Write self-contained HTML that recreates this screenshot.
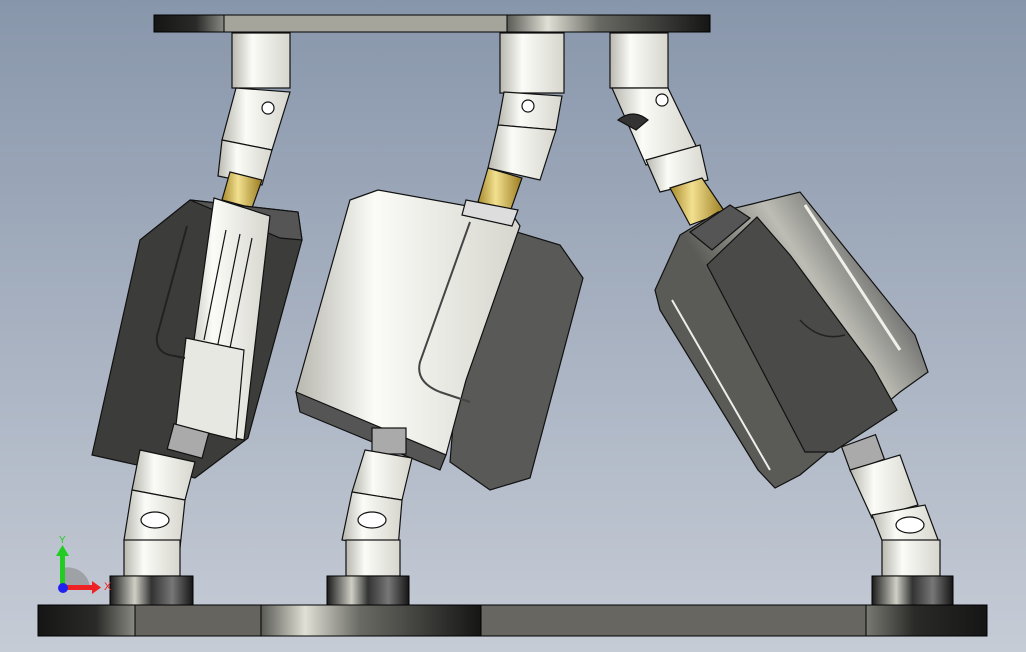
<!DOCTYPE html>
<html><head><style>
html,body{margin:0;padding:0;width:1026px;height:652px;overflow:hidden;background:#a5afbf}
svg{display:block}
text{font-family:"Liberation Sans",sans-serif}
</style></head><body>
<svg width="1026" height="652" viewBox="0 0 1026 652" xmlns="http://www.w3.org/2000/svg">
<defs>
<linearGradient id="bg" x1="0" y1="0" x2="0" y2="1">
<stop offset="0" stop-color="#8896ab"/><stop offset="1" stop-color="#c6ccd6"/></linearGradient>
<linearGradient id="dk" x1="0" x2="1"><stop offset="0" stop-color="#151515"/><stop offset=".6" stop-color="#2a2a28"/><stop offset="1" stop-color="#8a8a84"/></linearGradient>
<linearGradient id="dk2" x1="1" x2="0"><stop offset="0" stop-color="#151515"/><stop offset=".6" stop-color="#2a2a28"/><stop offset="1" stop-color="#7a7a74"/></linearGradient>
<linearGradient id="lt" x1="0" x2="1"><stop offset="0" stop-color="#5a5a55"/><stop offset=".2" stop-color="#e0e0d6"/><stop offset=".45" stop-color="#6a6a64"/><stop offset="1" stop-color="#151515"/></linearGradient>
<linearGradient id="foot" x1="0" x2="1"><stop offset="0" stop-color="#1a1a1a"/><stop offset=".3" stop-color="#cfcfc6"/><stop offset=".5" stop-color="#333"/><stop offset=".75" stop-color="#777"/><stop offset="1" stop-color="#151515"/></linearGradient>
<linearGradient id="wh" x1="0" x2="1"><stop offset="0" stop-color="#b8b8b0"/><stop offset=".35" stop-color="#fbfbf7"/><stop offset="1" stop-color="#d6d6ce"/></linearGradient>
<linearGradient id="gold" x1="0" x2="1"><stop offset="0" stop-color="#a88a2a"/><stop offset=".4" stop-color="#f2e090"/><stop offset="1" stop-color="#9a7c20"/></linearGradient>
<linearGradient id="m3" x1="0" y1="0" x2="1" y2="-0.7"><stop offset="0" stop-color="#5a5a56"/><stop offset=".25" stop-color="#bdbdb5"/><stop offset=".45" stop-color="#666"/><stop offset=".7" stop-color="#e2e2da"/><stop offset="1" stop-color="#6a6a66"/></linearGradient>
</defs>
<rect width="1026" height="652" fill="url(#bg)"/>

<!-- top plate -->
<rect x="154" y="15" width="70" height="17" fill="url(#dk)" stroke="#000"/>
<rect x="224" y="15" width="283" height="17" fill="#a5a59c" stroke="#000"/>
<rect x="507" y="15" width="203" height="17" fill="url(#lt)" stroke="#000"/>

<!-- legs upper -->
<g stroke="#111" stroke-width="1.2">
<rect x="232" y="33" width="58" height="55" fill="url(#wh)"/>
<rect x="500" y="33" width="64" height="60" fill="url(#wh)"/>
<rect x="610" y="33" width="58" height="55" fill="url(#wh)"/>
<polygon points="236,88 290,92 272,150 222,140" fill="url(#wh)"/>
<polygon points="222,140 272,150 262,185 218,176" fill="url(#wh)"/>
<polygon points="230,172 262,180 252,208 222,200" fill="url(#gold)"/>
<polygon points="504,92 562,96 556,130 498,125" fill="url(#wh)"/>
<polygon points="498,125 556,130 540,180 488,168" fill="url(#wh)"/>
<polygon points="488,168 522,178 510,212 478,202" fill="url(#gold)"/>
<polygon points="612,88 668,88 698,150 646,165" fill="url(#wh)"/>
<polygon points="646,160 700,145 708,180 660,192" fill="url(#wh)"/>
<polygon points="670,188 702,178 725,212 690,225" fill="url(#gold)"/>
<circle cx="268" cy="108" r="6" fill="#fff"/><circle cx="528" cy="106" r="6" fill="#fff"/><circle cx="662" cy="100" r="6" fill="#fff"/>
<path d="M618,120 q15,-12 30,0 l-12,10z" fill="#333"/>
</g>

<!-- motor 1 -->
<g stroke="#111" stroke-width="1.2">
<polygon points="190,200 298,212 302,240 248,438 195,478 92,455 140,240" fill="#3c3c3a"/>
<polygon points="190,200 298,212 302,240 280,238" fill="#555"/>
<polygon points="214,198 270,216 244,440 182,426" fill="url(#wh)"/>
<polygon points="186,338 244,350 236,440 176,425" fill="#e8e8e2"/>
<line x1="226" y1="230" x2="204" y2="340"/><line x1="240" y1="234" x2="218" y2="344"/><line x1="252" y1="238" x2="230" y2="348"/>
<path d="M187,226 l-30,110 q-2,18 18,20 l10,2" fill="none" stroke="#222" stroke-width="2"/>
</g>

<!-- motor 2 -->
<g stroke="#111" stroke-width="1.2">
<polygon points="470,218 560,245 583,278 530,478 490,490 450,462" fill="#595957"/>
<polygon points="378,190 512,214 520,226 466,380 446,455 320,418 296,392 350,200" fill="url(#wh)"/>
<polygon points="296,392 446,455 440,470 300,412" fill="#555"/>
<path d="M470,222 l-50,140 q-5,20 20,30 l30,10" fill="none" stroke="#444" stroke-width="2"/>
<polygon points="466,200 518,210 512,226 462,215" fill="#ddd"/>
</g>

<!-- motor 3 -->
<g stroke="#111" stroke-width="1.2">
<polygon points="680,235 718,212 752,204 800,192 915,335 928,372 900,392 800,475 775,488 758,470 660,310 655,290" fill="url(#m3)"/>
<polygon points="707,265 757,217 790,255 873,367 897,410 833,452 805,452" fill="#4a4a48"/>
<polygon points="690,232 730,205 750,218 712,250" fill="#555"/>
<line x1="672" y1="300" x2="770" y2="470" stroke="#eee" stroke-width="2"/>
<line x1="805" y1="205" x2="900" y2="350" stroke="#f0f0e8" stroke-width="3"/>
<path d="M800,320 q20,22 45,15" fill="none" stroke="#222" stroke-width="1.5"/>
</g>

<!-- legs lower -->
<g stroke="#111" stroke-width="1.2">
<rect x="170" y="428" width="36" height="26" fill="#aaa" transform="rotate(15 188 441)"/>
<polygon points="140,450 195,462 185,500 132,490" fill="url(#wh)"/>
<polygon points="132,490 185,500 180,548 124,540" fill="url(#wh)"/>
<rect x="124" y="540" width="56" height="36" fill="url(#wh)"/>
<rect x="372" y="428" width="34" height="26" fill="#aaa"/>
<polygon points="365,450 412,458 402,500 352,492" fill="url(#wh)"/>
<polygon points="352,492 402,500 398,548 342,540" fill="url(#wh)"/>
<rect x="346" y="540" width="54" height="36" fill="url(#wh)"/>
<rect x="845" y="440" width="36" height="26" fill="#aaa" transform="rotate(-20 863 453)"/>
<polygon points="850,470 900,455 918,505 872,518" fill="url(#wh)"/>
<polygon points="872,515 925,505 940,545 885,548" fill="url(#wh)"/>
<rect x="882" y="540" width="58" height="36" fill="url(#wh)"/>
<ellipse cx="155" cy="520" rx="14" ry="8" fill="#fff"/><ellipse cx="372" cy="520" rx="14" ry="8" fill="#fff"/><ellipse cx="910" cy="525" rx="14" ry="8" fill="#fff"/>
</g>

<!-- feet -->
<rect x="110" y="576" width="83" height="29" fill="url(#foot)" stroke="#000"/>
<rect x="327" y="576" width="82" height="29" fill="url(#foot)" stroke="#000"/>
<rect x="872" y="576" width="81" height="29" fill="url(#foot)" stroke="#000"/>

<!-- bottom plate -->
<rect x="38" y="605" width="97" height="31" fill="url(#dk)" stroke="#000"/>
<rect x="135" y="605" width="126" height="31" fill="#66645e" stroke="#000"/>
<rect x="261" y="605" width="220" height="31" fill="url(#lt)" stroke="#000"/>
<rect x="481" y="605" width="385" height="31" fill="#676661" stroke="#000"/>
<rect x="866" y="605" width="121" height="31" fill="url(#dk2)" stroke="#000"/>

<!-- triad -->
<path d="M63,588 L63,568 A22,22 0 0 1 90,588 Z" fill="#888" opacity=".6"/>
<rect x="60" y="552" width="5" height="34" fill="#2c2"/>
<polygon points="56,556 62.5,545 69,556" fill="#2c2"/>
<rect x="63" y="585" width="30" height="5" fill="#e22"/>
<polygon points="92,581 101,587.5 92,594" fill="#e22"/>
<circle cx="63" cy="588" r="5" fill="#22e"/>
<text x="104" y="590" font-size="11" fill="#e22">X</text>
<text x="59" y="543" font-size="10" fill="#2c2">Y</text>
</svg>
</body></html>
